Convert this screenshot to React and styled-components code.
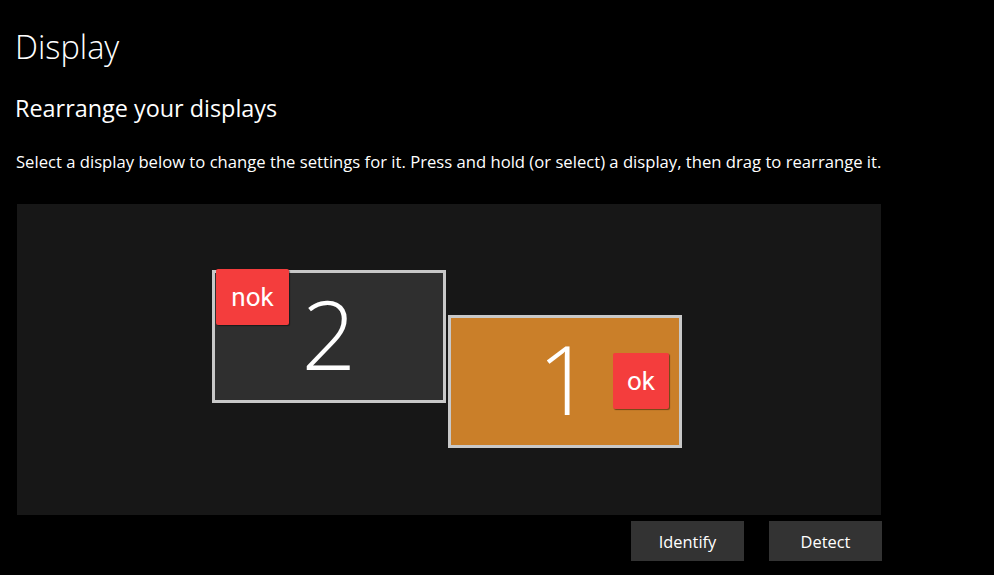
import React from "react";
import styled, { createGlobalStyle } from "styled-components";

const GlobalStyle = createGlobalStyle`
  html, body {
    margin: 0;
    padding: 0;
    background: #000;
  }
  body {
    font-family: "Open Sans", "Noto Sans", sans-serif;
    color: #fff;
  }
`;

const Page = styled.div`
  width: 994px;
  height: 575px;
  padding: 0 0 0 15px;
  box-sizing: border-box;
  overflow: hidden;
`;

const Title = styled.h1`
  margin: 0;
  padding-top: 25px;
  font-size: 32.5px;
  line-height: 44px;
  font-weight: 300;
`;

const Subtitle = styled.h2`
  margin: 0;
  padding-top: 24px;
  font-size: 23.4px;
  line-height: 30px;
  font-weight: 400;
`;

const Description = styled.p`
  margin: 0;
  padding: 28px 0 0 1px;
  font-size: 16.65px;
  line-height: 22px;
  white-space: nowrap;
`;

const Canvas = styled.div`
  position: relative;
  margin: 31px 0 0 2px;
  width: 864px;
  height: 311px;
  background: #171717;
`;

const Monitor = styled.div`
  position: absolute;
  left: ${(p) => p.$x}px;
  top: ${(p) => p.$y}px;
  width: ${(p) => p.$w}px;
  height: 133px;
  box-sizing: border-box;
  border: 3px solid #c8c8c8;
  padding-bottom: 7px;
  background: ${(p) => (p.$active ? "#ca7f29" : "#2f2f2f")};
  display: flex;
  align-items: center;
  justify-content: center;
`;

const MonitorNumber = styled.span`
  font-size: 96px;
  font-weight: 300;
  line-height: 1;
  color: #fff;
`;

const Badge = styled.div`
  position: absolute;
  left: ${(p) => p.$x}px;
  top: ${(p) => p.$y}px;
  width: ${(p) => p.$w}px;
  height: 56px;
  background: #f43d3d;
  border-radius: 2px;
  box-shadow: 1px 1px 1px rgba(0, 0, 0, 0.45);
  display: flex;
  align-items: center;
  justify-content: center;
  font-family: Roboto, "Open Sans", sans-serif;
  font-size: 26px;
  color: #fff;
`;

const ButtonRow = styled.div`
  display: flex;
  justify-content: flex-end;
  gap: 25px;
  width: 867px;
  margin-top: 6px;
`;

const Button = styled.button`
  width: 113px;
  height: 40px;
  border: none;
  background: #333;
  color: #fff;
  font-family: "Open Sans", "Noto Sans", sans-serif;
  font-size: 16.4px;
  padding: 0;
  cursor: pointer;
`;

const displays = [
  { id: 2, x: 195, y: 66, w: 234, badge: { text: "nok", x: 1, y: -4, w: 73 } },
  { id: 1, x: 431, y: 111, w: 234, active: true, badge: { text: "ok", x: 162, y: 35, w: 56 } },
];

export default function App() {
  return (
    <Page>
      <GlobalStyle />
      <Title>Display</Title>
      <Subtitle>Rearrange your displays</Subtitle>
      <Description>
        Select a display below to change the settings for it. Press and hold (or
        select) a display, then drag to rearrange it.
      </Description>
      <Canvas>
        {displays.map((d) => (
          <Monitor key={d.id} $x={d.x} $y={d.y} $w={d.w} $active={d.active}>
            <MonitorNumber>{d.id}</MonitorNumber>
            <Badge $x={d.badge.x} $y={d.badge.y} $w={d.badge.w}>
              {d.badge.text}
            </Badge>
          </Monitor>
        ))}
      </Canvas>
      <ButtonRow>
        <Button>Identify</Button>
        <Button>Detect</Button>
      </ButtonRow>
    </Page>
  );
}
